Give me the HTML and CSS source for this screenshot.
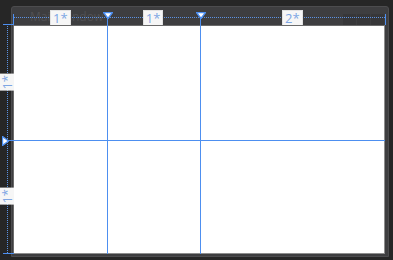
FILE: index.html
```html
<!DOCTYPE html>
<html lang="en">
<head>
  <meta charset="UTF-8" />
  <title>Grid Designer</title>
  <link rel="stylesheet" href="styles.css">
</head>
<body>
  <div class="stage">
    <div class="window">
      <div class="titlebar">
        <span class="title">MainWindow</span>
        <div class="caption-buttons">
          <span class="cap-btn"></span>
          <span class="cap-btn"></span>
          <span class="cap-btn"></span>
        </div>
      </div>
      <div class="client"></div>
    </div>

    <!-- rulers -->
    <div class="ruler-top"></div>
    <div class="ruler-left"></div>
    <div class="corner-h"></div>
    <div class="corner-v"></div>
    <div class="end-h"></div>
    <div class="end-v"></div>

    <!-- grid lines -->
    <div class="col-line col-a"></div>
    <div class="col-line col-b"></div>
    <div class="row-line"></div>

    <svg class="marker marker-col col-a-m" width="10" height="7" viewBox="0 0 10 7">
      <path d="M0.5 0.5 H9.5 L5 6.5 Z" fill="#ffffff" stroke="#4d8ff0" stroke-width="1.4"/>
    </svg>
    <svg class="marker marker-col col-b-m" width="10" height="7" viewBox="0 0 10 7">
      <path d="M0.5 0.5 H9.5 L5 6.5 Z" fill="#ffffff" stroke="#4d8ff0" stroke-width="1.4"/>
    </svg>
    <svg class="marker marker-row" width="7" height="10" viewBox="0 0 7 10">
      <path d="M0.5 0.5 V9.5 L6.5 5 Z" fill="#ffffff" stroke="#4d8ff0" stroke-width="1.4"/>
    </svg>

    <!-- size labels -->
    <div class="col-labels">
      <div class="cell"><span class="size-tag">1*</span></div>
      <div class="cell"><span class="size-tag">1*</span></div>
      <div class="cell"><span class="size-tag">2*</span></div>
    </div>
    <div class="row-labels">
      <div class="cell"><span class="size-tag vertical">1*</span></div>
      <div class="cell"><span class="size-tag vertical">1*</span></div>
    </div>
  </div>
</body>
</html>
```

FILE: styles.css
```css
* {
  box-sizing: border-box;
}

body {
  margin: 0;
  background: #262626;
  font-family: 'Open Sans', 'Noto Sans', sans-serif;
  overflow: hidden;
}

.stage {
  position: relative;
  width: 393px;
  height: 260px;
  padding: 6px 4px 0 11px;
}

.window {
  width: 378px;
  height: 251px;
  background: #3e3e40;
  border: 1px solid #4c4c4e;
  border-radius: 3px 3px 0 0;
  display: flex;
  flex-direction: column;
}

.titlebar {
  height: 18px;
  display: flex;
  align-items: flex-end;
  justify-content: space-between;
  padding: 0 4px 0 18px;
}

.title {
  font-size: 12px;
  color: #505053;
  line-height: 14px;
  margin-bottom: 1px;
}

.caption-buttons {
  display: flex;
  gap: 1px;
}

.cap-btn {
  width: 13px;
  height: 11px;
  background: #373739;
}

.client {
  flex: 1;
  margin: 0 3px 2px 1px;
  background: #ffffff;
  border: 1px solid #6a6a6a;
  border-right-color: #8e8e8e;
  border-bottom-color: #8e8e8e;
}

/* rulers */
.ruler-top {
  position: absolute;
  left: 13px;
  top: 17px;
  width: 372px;
  border-top: 1px dotted #5b92e4;
}

.ruler-left {
  position: absolute;
  left: 7px;
  top: 24px;
  height: 229px;
  border-left: 1px dotted #5b92e4;
}

.corner-h,
.end-h {
  position: absolute;
  left: 3px;
  width: 11px;
  height: 1px;
  background: #4d8ff0;
}

.corner-h { top: 24px; }
.end-h { top: 253px; }

.corner-v,
.end-v {
  position: absolute;
  top: 14px;
  width: 1px;
  height: 11px;
  background: #4d8ff0;
}

.corner-v { left: 13px; }
.end-v { left: 385px; }

/* grid lines */
.col-line {
  position: absolute;
  top: 17px;
  width: 1px;
  height: 237px;
  background: #4d8ff0;
}

.col-a { left: 107px; }
.col-b { left: 200px; }

.row-line {
  position: absolute;
  left: 3px;
  top: 140px;
  width: 382px;
  height: 1px;
  background: #4d8ff0;
}

.marker {
  position: absolute;
  display: block;
}

.marker-col { top: 12px; }
.col-a-m { left: 103px; }
.col-b-m { left: 196px; }

.marker-row {
  left: 2px;
  top: 136px;
}

/* size labels */
.col-labels {
  position: absolute;
  left: 14px;
  top: 10px;
  width: 371px;
  display: grid;
  grid-template-columns: 1fr 1fr 2fr;
}

.row-labels {
  position: absolute;
  left: 0;
  top: 25px;
  height: 229px;
  display: grid;
  grid-template-rows: 1fr 1fr;
}

.cell {
  display: flex;
  justify-content: center;
  align-items: center;
}

.size-tag {
  background: #f6f6f6;
  color: #7ea6e4;
  font-size: 13px;
  line-height: 15px;
  height: 15px;
  padding: 0 2px;
  border: 1px solid #e2e2e2;
  border-bottom: none;
}

.size-tag.vertical {
  writing-mode: vertical-rl;
  transform: rotate(180deg);
  width: 14px;
  height: auto;
  padding: 1px 0;
  border: none;
  line-height: 14px;
}
```
